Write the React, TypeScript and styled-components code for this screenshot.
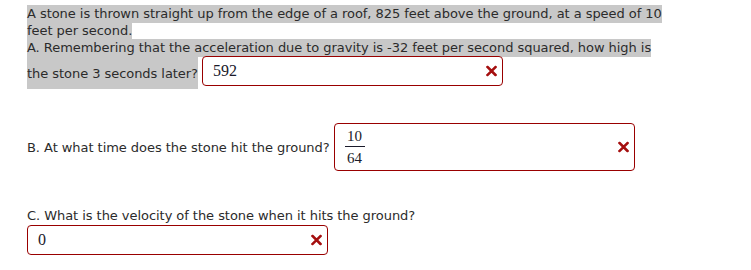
import React from 'react';
import styled, { createGlobalStyle } from 'styled-components';

const GlobalStyle = createGlobalStyle`
  html, body {
    margin: 0;
    padding: 0;
    background: #fff;
  }
  body {
    font-family: "DejaVu Sans", sans-serif;
    font-size: 13px;
    letter-spacing: -0.05px;
    color: #2b2b2b;
  }
`;

const Page = styled.div`
  padding: 5px 0 0 27px;
  width: 720px;
`;

const Prompt = styled.div`
  line-height: 17px;
`;

const Hl = styled.span`
  background: #c8c8c8;
  padding: 1px 0 2px;
`;

const InlineRow = styled.div<{ $top?: number }>`
  display: flex;
  align-items: flex-start;
  gap: 4px;
  margin-top: ${(p) => p.$top ?? 0}px;
`;

const HlLabel = styled.span`
  display: inline-flex;
  align-items: center;
  height: 33px;
  background: #c8c8c8;
  padding-top: 1px;
  box-sizing: border-box;
`;

const Label = styled.span`
  display: inline-flex;
  align-items: center;
  align-self: center;
`;

const AnswerBox = styled.div<{ $height: number }>`
  position: relative;
  box-sizing: border-box;
  width: 301px;
  height: ${(p) => p.$height}px;
  border: 1px solid #990000;
  border-radius: 4px;
  background: #fff;
  display: flex;
  align-items: center;
  padding-left: 10px;
  letter-spacing: 0;
`;

const MathValue = styled.span`
  font-family: "Liberation Serif", "DejaVu Serif", serif;
  font-size: 16px;
  color: #1a1a2a;
`;

const Frac = styled.span`
  display: inline-flex;
  flex-direction: column;
  align-items: center;
  font-family: "Liberation Serif", "DejaVu Serif", serif;
  font-size: 15px;
  line-height: 14px;
  color: #1a1a2a;
`;

const FracBar = styled.span`
  align-self: stretch;
  height: 1px;
  background: #1a1a2a;
  margin: 3px 0 4px;
  width: 20px;
`;

const Wrong = styled.svg`
  position: absolute;
  right: 5px;
  top: 50%;
  transform: translateY(-50%);
`;

const Question = styled.div<{ $top: number }>`
  margin-top: ${(p) => p.$top}px;
  line-height: 17px;
`;

const Cross = () => (
  <Wrong width="11" height="11" viewBox="0 0 11 11">
    <path d="M1.5 1.5 L9.5 9.5 M9.5 1.5 L1.5 9.5" stroke="#a50f0f" strokeWidth="2.6" strokeLinecap="square" />
  </Wrong>
);

const App = () => (
  <>
    <GlobalStyle />
    <Page>
      <Prompt>
        <Hl>A stone is thrown straight up from the edge of a roof, 825 feet above the ground, at a speed of 10</Hl>
        <br />
        <Hl>feet per second.</Hl>
        <br />
        <Hl>A. Remembering that the acceleration due to gravity is -32 feet per second squared, how high is</Hl>
      </Prompt>
      <InlineRow>
        <HlLabel>the stone 3 seconds later?</HlLabel>
        <AnswerBox $height={30}>
          <MathValue>592</MathValue>
          <Cross />
        </AnswerBox>
      </InlineRow>

      <InlineRow $top={34}>
        <Label>B. At what time does the stone hit the ground?</Label>
        <AnswerBox $height={48}>
          <Frac>
            10
            <FracBar />
            64
          </Frac>
          <Cross />
        </AnswerBox>
      </InlineRow>

      <Question $top={36}>C. What is the velocity of the stone when it hits the ground?</Question>
      <InlineRow $top={1}>
        <AnswerBox $height={30}>
          <MathValue>0</MathValue>
          <Cross />
        </AnswerBox>
      </InlineRow>
    </Page>
  </>
);

export default App;
